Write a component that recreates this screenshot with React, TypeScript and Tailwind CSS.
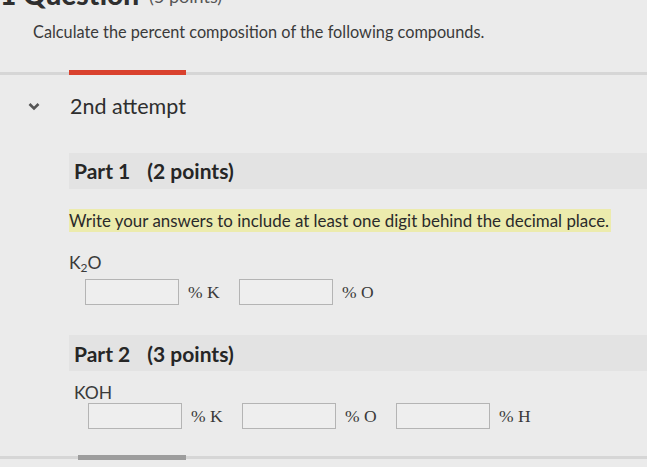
import React from "react";

// Percent composition question, attempt view

const font = { fontFamily: "Lato, 'Open Sans', sans-serif" };

function AnswerBox({ label }: { label: string }) {
  return (
    <div className="flex items-center w-[154px]">
      <div className="w-[94px] h-[26px] border border-[#b4b4b4] bg-[#eeeeee]" />
      <span className="ml-[9px] text-[17.5px] text-[#3a3a3a] font-['Liberation_Serif',serif]">{label}</span>
    </div>
  );
}

function PartHeader({ part, points }: { part: number; points: number }) {
  return (
    <div className="h-[36px] bg-[#e3e3e3] flex items-center pl-[5px] text-[21px] font-bold text-[#262626]">
      <span>Part {part}</span>
      <span className="ml-[17px]">({points} points)</span>
    </div>
  );
}

export default function App() {
  return (
    <div className="w-[647px] h-[467px] overflow-hidden bg-[#ebebeb] text-[#333]" style={font}>
      {/* Question title, scrolled mostly out of view */}
      <div className="h-[8px] flex items-end gap-[10px] text-[#2f2f2f]">
        <span className="text-[28px] font-black leading-none">1 Question</span>
        <span className="text-[18px] text-[#555] leading-none mb-[3px]">(5 points)</span>
      </div>

      <p className="mt-[14px] pl-[33px] text-[16.3px] leading-[20px] text-[#3a3a3a]">
        Calculate the percent composition of the following compounds.
      </p>

      {/* Attempt tab strip */}
      <div className="mt-[30px] relative h-[3px] bg-[#d6d6d6]">
        <div className="absolute left-[69px] -top-[2px] w-[117px] h-[5px] bg-[#d9412e]" />
      </div>

      <div className="mt-[18px] flex items-center h-[26px]">
        <svg className="ml-[28px] w-[12px] h-[9px]" viewBox="0 0 12 9">
          <path d="M1.5 2 L6 6.5 L10.5 2" fill="none" stroke="#555" strokeWidth="2.6" />
        </svg>
        <span className="ml-[30px] text-[21.5px] text-[#2e2e2e]">2nd attempt</span>
      </div>

      <div className="ml-[69px] mt-[34px]">
        <PartHeader part={1} points={2} />

        <div className="mt-[20px] inline-block bg-[#ecebad] pr-[2px] h-[23px] text-[16.9px] leading-[23px] text-[#2a2a2a]">
          Write your answers to include at least one digit behind the decimal place.
        </div>

        <div className="mt-[20px] h-[20px] text-[17.5px] text-[#3a3a3a] leading-[20px]">
          K<sub className="text-[12px] leading-none">2</sub>O
        </div>
        <div className="mt-[6px] ml-[16px] flex">
          <AnswerBox label="% K" />
          <AnswerBox label="% O" />
        </div>

        <div className="mt-[30px]">
          <PartHeader part={2} points={3} />
        </div>

        <div className="mt-[12px] pl-[5px] text-[17.5px] text-[#3a3a3a] leading-[20px]">KOH</div>
        <div className="ml-[19px] flex">
          <AnswerBox label="% K" />
          <AnswerBox label="% O" />
          <AnswerBox label="% H" />
        </div>
      </div>

      {/* Next tab strip */}
      <div className="mt-[26px] relative h-[3px] bg-[#d6d6d6]">
        <div className="absolute left-[78px] -top-[1px] w-[108px] h-[5px] bg-[#9d9d9d]" />
      </div>
    </div>
  );
}
